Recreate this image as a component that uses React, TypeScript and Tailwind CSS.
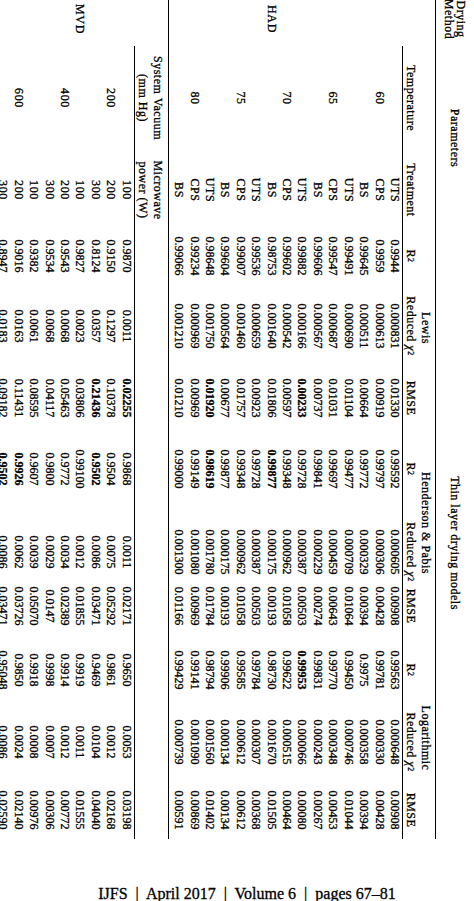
import React from "react";

const GRID =
  "grid grid-cols-[54px_104px_80px_52px_88px_56px_86px_80px_28px_100px_44px_92px]";

const had: string[][] = [
  ["", "", "UTS", "0.9944", "0.000831", "0.01330", "0.99592", "0.000605", "0.00908", "0.99563", "0.000648", "0.00908"],
  ["", "60", "CPS", "0.9959", "0.000613", "0.00919", "0.99797", "0.000306", "0.00428", "0.99781", "0.000330", "0.00428"],
  ["", "", "BS", "0.99645", "0.000511", "0.00664", "0.99772", "0.000329", "0.00394", "0.9975", "0.000358", "0.00394"],
  ["", "", "UTS", "0.99491", "0.000690", "0.01104", "0.99477", "0.000709", "0.01064", "0.99450", "0.000746", "0.01044"],
  ["", "65", "CPS", "0.99547", "0.000687", "0.01031", "0.99697", "0.000459", "0.00643", "0.99770", "0.000348", "0.00453"],
  ["", "", "BS", "0.99606", "0.000567", "0.00737", "0.99841", "0.000229", "0.00274", "0.99831", "0.000243", "0.00267"],
  ["", "", "UTS", "0.99882", "0.000166", "*0.00233", "0.99728", "0.000387", "0.00503", "*0.99953", "0.000066", "0.00080"],
  ["", "70", "CPS", "0.99602", "0.000542", "0.00597", "0.99348", "0.000962", "0.01058", "0.99622", "0.000515", "0.00464"],
  ["HAD", "", "BS", "0.98753", "0.001640", "0.01806", "*0.99877", "0.000175", "0.00193", "0.98730", "0.001670", "0.01505"],
  ["", "", "UTS", "0.99536", "0.000659", "0.00923", "0.99728", "0.000387", "0.00503", "0.99784", "0.000307", "0.00368"],
  ["", "75", "CPS", "0.99007", "0.001460", "0.01757", "0.99348", "0.000962", "0.01058", "0.99585", "0.000612", "0.00612"],
  ["", "", "BS", "0.99604", "0.000564", "0.00677", "0.99877", "0.000175", "0.00193", "0.99906", "0.000134", "0.00134"],
  ["", "", "UTS", "0.98648", "0.001750", "*0.01920", "*0.98619", "0.001780", "0.01784", "0.98794", "0.001560", "0.01402"],
  ["", "80", "CPS", "0.99234", "0.000969", "0.00969", "0.99149", "0.001080", "0.00969", "0.99141", "0.001090", "0.00869"],
  ["", "", "BS", "0.99066", "0.001210", "0.01210", "0.99000", "0.001300", "0.01166", "0.99429", "0.000739", "0.00591"],
];

const mvd: string[][] = [
  ["", "", "100", "0.9870", "0.0011", "*0.02255", "0.9868", "0.0011", "0.02171", "0.9650", "0.0053", "0.03198"],
  ["", "200", "200", "0.9150", "0.1297", "0.10378", "0.9504", "0.0075", "0.05292", "0.9861", "0.0012", "0.02168"],
  ["", "", "300", "0.8124", "0.0357", "*0.21436", "*0.9502", "0.0086", "0.03471", "0.9469", "0.0104", "0.04040"],
  ["MVD", "", "100", "0.9827", "0.0023", "0.03806", "0.99100", "0.0012", "0.01855", "0.9919", "0.0011", "0.01555"],
  ["", "400", "200", "0.9543", "0.0068", "0.05463", "0.9772", "0.0034", "0.02389", "0.9914", "0.0012", "0.00772"],
  ["", "", "300", "0.9534", "0.0068", "0.04117", "0.9800", "0.0029", "0.0147", "0.9998", "0.0007", "0.00306"],
  ["", "", "100", "0.9382", "0.0061", "0.08595", "0.9607", "0.0039", "0.05070", "0.9918", "0.0008", "0.00976"],
  ["", "600", "200", "0.9016", "0.0163", "0.11431", "*0.9926", "0.0062", "0.03726", "0.9850", "0.0024", "0.02140"],
  ["", "", "300", "0.8947", "0.0183", "0.09182", "*0.9502", "0.0086", "0.03471", "0.95048", "0.0086", "0.02590"],
];

function Cell({ v, word }: { v: string; word?: boolean }) {
  const bold = v.startsWith("*");
  const text = bold ? v.slice(1) : v;
  return (
    <div
      className={`flex justify-center whitespace-nowrap ${bold ? "font-bold" : ""} ${
        word ? "tracking-[0.6px]" : ""
      }`}
    >
      {text}
    </div>
  );
}

function DataRow({ cells }: { cells: string[] }) {
  return (
    <div className={`${GRID} h-[15.43px] leading-[15.43px]`}>
      {cells.map((c, i) => (
        <Cell key={i} v={c} word={i < 3} />
      ))}
    </div>
  );
}

const R2 = (
  <span>
    R<sup className="text-[8px] relative -top-[1px]">2</sup>
  </span>
);
const Chi = (
  <span>
    Reduced <i>χ</i>
    <sup className="text-[8px] relative -top-[1px]">2</sup>
  </span>
);

function H({ children, span }: { children: React.ReactNode; span?: string }) {
  return (
    <div className={`flex justify-center whitespace-nowrap tracking-[0.5px] ${span ?? ""}`}>
      {children}
    </div>
  );
}

export default function App() {
  return (
    <div className="w-[474px] h-[901px] overflow-hidden bg-white text-black font-['Liberation_Serif',serif] [-webkit-text-stroke:0.3px_black]">
      <div className="h-[884px] w-[474px] overflow-hidden">
        <div className="w-[884px] h-[474px] origin-top-left rotate-90 translate-x-[474px] text-[12px]">
          <div className="ml-[-2px] mt-[-6px] w-[870px]">
            {/* header row 1 */}
            <div className={`${GRID} h-[38px] items-center`}>
              <div className="flex flex-col items-center leading-[12.5px] tracking-[0.5px]">
                <span>Drying</span>
                <span>Method</span>
              </div>
              <H span="col-span-2">Parameters</H>
              <H span="col-span-9">Thin layer drying models</H>
            </div>
            <div className="h-px w-[847px] bg-black" />
            {/* header row 2 */}
            <div className="pt-[2px]">
              <div className={`${GRID} h-[15px] leading-[15px]`}>
                <div />
                <div />
                <div />
                <H span="col-span-3">Lewis</H>
                <H span="col-span-3">Henderson &amp; Pabis</H>
                <H span="col-span-3">Logarithmic</H>
              </div>
              <div className={`${GRID} h-[15px] leading-[15px]`}>
                <div />
                <H>Temperature</H>
                <H>Treatment</H>
                <H>{R2}</H>
                <H>{Chi}</H>
                <H>RMSE</H>
                <H>{R2}</H>
                <H>{Chi}</H>
                <H>RMSE</H>
                <H>{R2}</H>
                <H>{Chi}</H>
                <H>RMSE</H>
              </div>
            </div>
            <div className="h-px w-[793px] ml-[54px] bg-black" />
            <div>
              {had.map((r, i) => (
                <DataRow key={i} cells={r} />
              ))}
            </div>
            <div className="mt-[2px] h-px w-[847px] bg-black" />
            {/* MVD header */}
            <div className={`${GRID} pt-[3px] leading-[15px]`}>
              <div />
              <div className="flex flex-col items-center whitespace-nowrap tracking-[0.5px]">
                <span>System Vacuum</span>
                <span>(mm Hg)</span>
              </div>
              <div className="flex flex-col items-center whitespace-nowrap tracking-[0.5px]">
                <span>Microwave</span>
                <span>power (W)</span>
              </div>
            </div>
            <div className="h-px w-[793px] ml-[54px] bg-black" />
            <div>
              {mvd.map((r, i) => (
                <DataRow key={i} cells={r} />
              ))}
            </div>
          </div>
        </div>
      </div>
      <div className="flex justify-center pl-[20px] text-[16px] leading-[20px] whitespace-nowrap">
        IJFS &nbsp;|&nbsp; April 2017 &nbsp;|&nbsp; Volume 6 &nbsp;|&nbsp; pages 67–81
      </div>
    </div>
  );
}
